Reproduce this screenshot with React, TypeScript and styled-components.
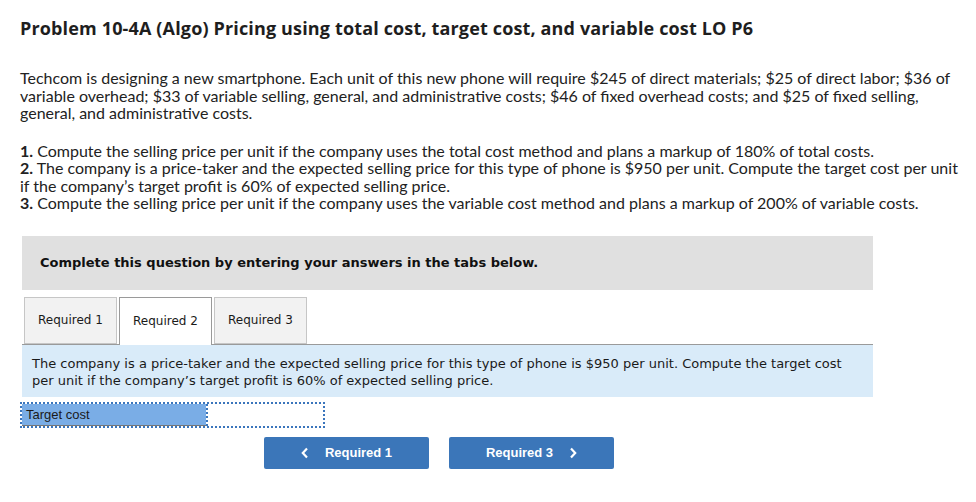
import React from 'react'
import styled, { createGlobalStyle } from 'styled-components'

const GlobalStyle = createGlobalStyle`
  html, body {
    margin: 0;
    padding: 0;
    background: #ffffff;
  }
`

const Page = styled.div`
  width: 976px;
  height: 502px;
  overflow: hidden;
  padding: 17px 0 0 20px;
  box-sizing: border-box;
  color: #1a1a1a;
`

const Title = styled.h1`
  margin: 0;
  font-family: 'Open Sans', Lato, sans-serif;
  font-weight: 700;
  font-size: 18px;
  line-height: 22px;
  letter-spacing: 0.15px;
  color: #1e1e1e;
`

const Prose = styled.p<{ $top?: number }>`
  margin: ${({ $top }) => `${$top ?? 0}px`} 0 0 0;
  width: 942px;
  font-family: Lato, 'Liberation Sans', sans-serif;
  font-size: 16px;
  line-height: 17.5px;
  color: #222;
`

const Item = styled.span`
  display: block;
`

const Num = styled.b`
  font-weight: 700;
`

const Section = styled.div`
  margin-top: 24px;
  margin-left: 2px;
  width: 851px;
`

const Instruction = styled.div`
  height: 54px;
  background: #e0e0e0;
  display: flex;
  align-items: center;
  padding-left: 18px;
  font-family: 'DejaVu Sans', Verdana, sans-serif;
  font-weight: 700;
  font-size: 13px;
  color: #111;
`

const TabBar = styled.div`
  display: flex;
  gap: 2px;
  margin-top: 7px;
  padding-left: 2px;
  border-bottom: 1px solid #9a9a9a;
  height: 47px;
`

const Tab = styled.div<{ $active?: boolean }>`
  width: 93px;
  height: ${({ $active }) => ($active ? '48px' : '47px')};
  box-sizing: border-box;
  display: flex;
  align-items: center;
  justify-content: center;
  background: ${({ $active }) => ($active ? '#ffffff' : '#f2f2f2')};
  border: 1px solid ${({ $active }) => ($active ? '#9a9a9a' : '#c6c6c6')};
  border-bottom: ${({ $active }) => ($active ? 'none' : '1px solid #c6c6c6')};
  font-family: 'DejaVu Sans', Verdana, sans-serif;
  font-size: 12px;
  color: #1a1a1a;
  z-index: ${({ $active }) => ($active ? 1 : 0)};
`

const Info = styled.div`
  background: #d9ebf9;
  padding: 10px 20px 8px 10px;
  font-family: 'DejaVu Sans', Verdana, sans-serif;
  font-size: 13px;
  line-height: 17px;
  color: #1a1a1a;
`

const AnswerRow = styled.div`
  display: flex;
  width: 305px;
  height: 26px;
  box-sizing: border-box;
  margin: 5px 0 0 -2px;
  border: 2px dotted #3a75bc;
`

const AnswerLabel = styled.div`
  width: 184px;
  background: #7aade6;
  border-bottom: 1px solid #777;
  display: flex;
  align-items: center;
  padding-left: 4px;
  box-sizing: border-box;
  font-family: 'Liberation Sans', Arial, sans-serif;
  font-size: 13px;
  color: #1a1a1a;
`

const AnswerInput = styled.input`
  flex: 1;
  border: none;
  border-left: 2px dotted #3a75bc;
  outline: none;
  background: #fff;
  padding: 0;
  min-width: 0;
`

const NavRow = styled.div`
  display: flex;
  gap: 20px;
  margin: 9px 0 0 242px;
`

const NavButton = styled.button`
  width: 165px;
  height: 32px;
  background: #3b76b9;
  border: none;
  border-radius: 2px;
  display: flex;
  align-items: center;
  justify-content: center;
  gap: 16px;
  font-family: 'Liberation Sans', Arial, sans-serif;
  font-weight: 700;
  font-size: 13px;
  color: #ffffff;
  cursor: pointer;
`

const Chevron = ({ dir }: { dir: 'left' | 'right' }) => (
  <svg width="8" height="12" viewBox="0 0 8 12">
    <path
      d={dir === 'left' ? 'M6 1.5 L1.8 6 L6 10.5' : 'M2 1.5 L6.2 6 L2 10.5'}
      stroke="#fff"
      strokeWidth="2.2"
      fill="none"
    />
  </svg>
)

export default function App() {
  return (
    <>
      <GlobalStyle />
      <Page>
        <Title>Problem 10-4A (Algo) Pricing using total cost, target cost, and variable cost LO P6</Title>
        <Prose $top={30}>
          Techcom is designing a new smartphone. Each unit of this new phone will require $245 of direct materials; $25 of
          direct labor; $36 of variable overhead; $33 of variable selling, general, and administrative costs; $46 of fixed
          overhead costs; and $25 of fixed selling, general, and administrative costs.
        </Prose>
        <Prose $top={20}>
          <Item>
            <Num>1.</Num> Compute the selling price per unit if the company uses the total cost method and plans a markup of
            180% of total costs.
          </Item>
          <Item>
            <Num>2.</Num> The company is a price-taker and the expected selling price for this type of phone is $950 per
            unit. Compute the target cost per unit if the company’s target profit is 60% of expected selling price.
          </Item>
          <Item>
            <Num>3.</Num> Compute the selling price per unit if the company uses the variable cost method and plans a markup
            of 200% of variable costs.
          </Item>
        </Prose>
        <Section>
          <Instruction>Complete this question by entering your answers in the tabs below.</Instruction>
          <TabBar>
            <Tab>Required 1</Tab>
            <Tab $active>Required 2</Tab>
            <Tab>Required 3</Tab>
          </TabBar>
          <Info>
            The company is a price-taker and the expected selling price for this type of phone is $950 per unit. Compute the
            target cost per unit if the company’s target profit is 60% of expected selling price.
          </Info>
          <AnswerRow>
            <AnswerLabel>Target cost</AnswerLabel>
            <AnswerInput />
          </AnswerRow>
          <NavRow>
            <NavButton>
              <Chevron dir="left" />
              Required 1
            </NavButton>
            <NavButton>
              Required 3
              <Chevron dir="right" />
            </NavButton>
          </NavRow>
        </Section>
      </Page>
    </>
  )
}
